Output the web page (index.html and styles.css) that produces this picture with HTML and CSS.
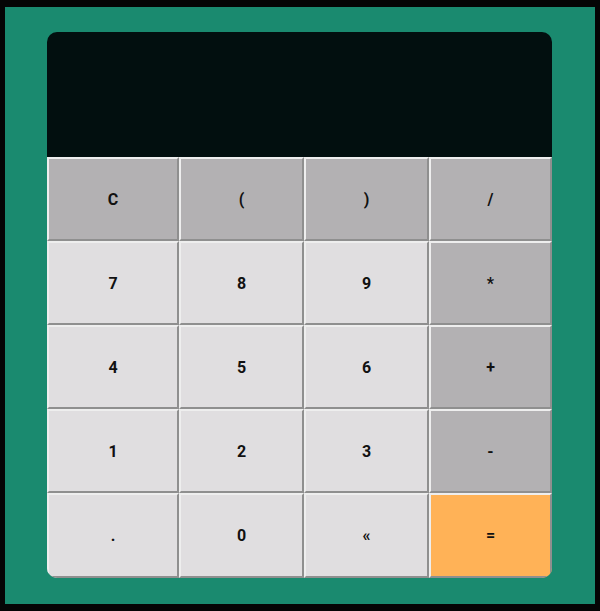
FILE: index.html
```html
<!DOCTYPE html>
<html>
<head>
<meta charset="utf-8">
<link rel="stylesheet" href="styles.css">
</head>
<body>
<div class="frame">
  <div class="calc">
    <div class="display"></div>
    <div class="keys">
      <button class="key op">C</button>
      <button class="key op">(</button>
      <button class="key op">)</button>
      <button class="key op">/</button>
      <button class="key">7</button>
      <button class="key">8</button>
      <button class="key">9</button>
      <button class="key op">*</button>
      <button class="key">4</button>
      <button class="key">5</button>
      <button class="key">6</button>
      <button class="key op">+</button>
      <button class="key">1</button>
      <button class="key">2</button>
      <button class="key">3</button>
      <button class="key op">-</button>
      <button class="key">.</button>
      <button class="key">0</button>
      <button class="key">&laquo;</button>
      <button class="key eq">=</button>
    </div>
  </div>
</div>
</body>
</html>
```
FILE: styles.css
```css
html, body {
  margin: 0;
  padding: 0;
  background: #050505;
}
body {
  width: 600px;
  height: 611px;
  overflow: hidden;
}
.frame {
  margin: 7px 5px 0 5px;
  width: 590px;
  height: 597px;
  box-sizing: border-box;
  padding: 25px 43px 0 42px;
  background: #1a8a6f;
}
.calc {
  width: 505px;
  height: 546px;
  border-radius: 10px;
  overflow: hidden;
  display: flex;
  flex-direction: column;
}
.display {
  height: 125px;
  background: #020f0f;
  flex: none;
}
.keys {
  display: grid;
  grid-template-columns: 132px 125px 125px 123px;
  grid-template-rows: 84px 84px 84px 84px 85px;
}
.key {
  margin: 0;
  border-style: solid;
  border-width: 2px;
  border-color: #eeeeee #8f8f8f #8f8f8f #eeeeee;
  background: #e0dee0;
  font-family: Roboto, "Liberation Sans", sans-serif;
  font-weight: 700;
  font-size: 16px;
  color: #111;
  padding: 0;
}
.key.op {
  background: #b3b1b3;
}
.key.eq {
  background: #ffb257;
}
```
